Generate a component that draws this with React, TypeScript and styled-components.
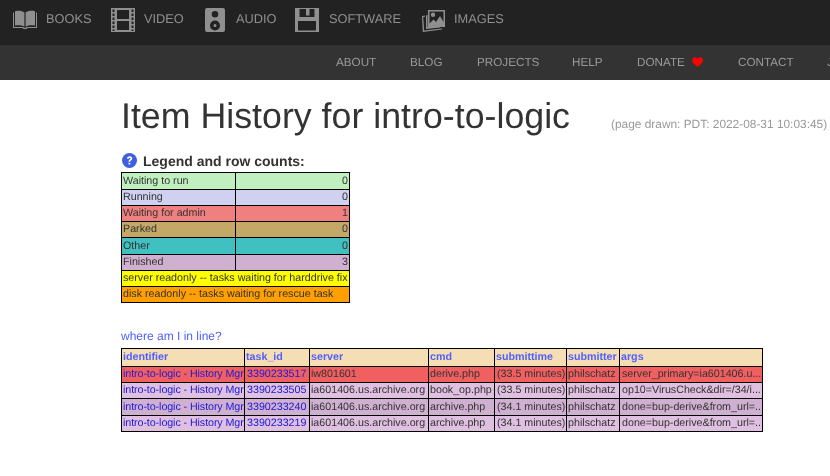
import React from "react";
import styled, { createGlobalStyle } from "styled-components";

const Global = createGlobalStyle`
  html, body { margin: 0; padding: 0; background: #fff; overflow: hidden; }
  body { font-family: "Liberation Sans", Arial, sans-serif; color: #333; text-rendering: geometricPrecision; }
`;
const Page = styled.div`width: 830px; height: 476px; overflow: hidden; will-change: transform;`;
const TopBar = styled.nav`
  height: 45px; background: #222; display: flex; align-items: flex-start; padding-left: 13px;
`;
const MediaLink = styled.a<{ $w: number; $gap: number }>`
  width: ${(p) => p.$w}px; height: 36px; display: flex; align-items: center; gap: ${(p) => p.$gap}px;
  color: #8f8f8f; font-size: 12.8px; flex: none;
  svg { margin-top: 4px; flex: none; }
`;
const SubBar = styled.nav`
  height: 35px; background: #333; display: flex; align-items: center; padding-left: 336px;
  white-space: nowrap; overflow: hidden;
`;
const SubLink = styled.a<{ $w: number }>`
  width: ${(p) => p.$w}px; flex: none; color: #9a9a9a; font-size: 11.7px; display: flex; align-items: center;
`;
const Heart = styled.svg`margin: -1px 0 0 7px;`;
const Main = styled.main`padding: 0 0 0 121px;`;
const TitleRow = styled.div`display: flex; align-items: baseline; height: 73px; padding-top: 15px; box-sizing: border-box; white-space: nowrap;`;
const Title = styled.h1`margin: 0; font-size: 35.75px; line-height: 42px; font-weight: 400; color: #333;`;
const Drawn = styled.span`margin-left: 41px; font-size: 11.9px; color: #999;`;
const LegendHead = styled.h4`
  margin: 0; height: 19px; font-size: 14px; line-height: 16px; font-weight: 700; color: #333;
  display: flex; align-items: flex-start; gap: 6px;
  svg { margin-left: 1px; }
`;
const Grid = styled.table`
  border-collapse: collapse; table-layout: fixed; font-size: 10.7px; line-height: 15px; color: #333;
`;
const Row = styled.tr<{ $bg: string; $h?: number }>`
  background: ${(p) => p.$bg}; height: ${(p) => p.$h ?? 16}px;
`;
const Cell = styled.td<{ $right?: boolean }>`
  border: 1px solid #000; padding: 0 1px; white-space: nowrap; overflow: hidden;
  text-align: ${(p) => (p.$right ? "right" : "left")};
`;
const Wide = styled(Cell)`padding-left: 2px;`;
const Tight = styled(Cell)`padding: 0 0 0 1px; letter-spacing: -0.08px;`;
const Head = styled.th`
  border: 1px solid #000; padding: 0 1px; text-align: left; font-weight: 700;
  color: #4f5fff; white-space: nowrap;
`;
const LineLink = styled.a`display: block; margin-top: 26px; height: 19px; line-height: 14px; font-size: 12px; color: #4f5fff;`;
const Blue = styled.span`color: #1a1ad8;`;

const Book = () => (
  <svg width="24" height="24" viewBox="0 0 24 24" fill="#8f8f8f">
    <path d="M0 4.500v15.600h9.500l1 .9h3l1-.9H24V4.500h-1v14.600H14l-2 1-2-1H1V4.500z" />
    <path d="M2 3.200c3.500-.8 7-.6 9.400 1.200v14.400c-2.400-1.500-5.900-1.700-9.400-1.200zM22 3.200c-3.500-.8-7-.6-9.400 1.200v14.400c2.400-1.500 5.900-1.700 9.400-1.200z" />
  </svg>
);
const Film = () => (
  <svg width="24" height="24" viewBox="0 0 24 24" fill="#8f8f8f" fillRule="evenodd">
    <path d="M0 0h24v24H0zM1.500 1.500v2.500h2V1.500zm0 4v2.500h2V5.500zm0 4v2.500h2V9.500zm0 4V16h2v-2.500zm0 4V20h2v-2.500zm0 4V23h2v-1.500zM20.500 1.500v2.500h2V1.500zm0 4v2.500h2V5.500zm0 4v2.500h2V9.500zm0 4V16h2v-2.500zm0 4V20h2v-2.500zm0 4V23h2v-1.500zM6 2v9h12V2zm0 11v9h12v-9z" />
  </svg>
);
const Speaker = () => (
  <svg width="20" height="24" viewBox="0 0 20 24" fill="#8f8f8f" fillRule="evenodd">
    <path d="M2 0h16a2 2 0 0 1 2 2v20a2 2 0 0 1-2 2H2a2 2 0 0 1-2-2V2a2 2 0 0 1 2-2zM10 3a3.300 3.300 0 1 0 0 6.600A3.300 3.300 0 0 0 10 3zm0 9.500a5 5 0 1 0 0 10 5 5 0 0 0 0-10zm0 3.500a1.500 1.500 0 1 1 0 3 1.500 1.500 0 0 1 0-3z" />
  </svg>
);
const Floppy = () => (
  <svg width="24" height="24" viewBox="0 0 24 24" fill="#8f8f8f" fillRule="evenodd">
    <path d="M0 0h24v24H0zM4.500 1v8h15V1h-5v6.500h-3.500V1zM3 13v9.500h18V13z" />
  </svg>
);
const Photos = () => (
  <svg width="24" height="24" viewBox="0 0 24 24" fill="#8f8f8f" fillRule="evenodd">
    <path d="M7 2h17v17H7zM8.500 3.500v12l4-4 2.500 2.500 4-6 3.500 6v-10.500zM12 4.500a2.200 2.200 0 1 1 0 4.400 2.200 2.200 0 0 1 0-4.400z" />
    <path d="M5 7.500v13.500l14-1.500v-.5H6.500V6.800zM1 8l3-.4v1.200l-1.800.3 1 13.400L21 20.600v1L1.800 24z" />
  </svg>
);

const media = [
  { label: "BOOKS", w: 98, gap: 9, icon: <Book /> },
  { label: "VIDEO", w: 94, gap: 9, icon: <Film /> },
  { label: "AUDIO", w: 90, gap: 11, icon: <Speaker /> },
  { label: "SOFTWARE", w: 126, gap: 10, icon: <Floppy /> },
  { label: "IMAGES", w: 100, gap: 9, icon: <Photos /> },
];
const sub = [
  ["ABOUT", 74], ["BLOG", 67], ["PROJECTS", 95], ["HELP", 65], ["DONATE", 101], ["CONTACT", 89], ["J", 20],
] as [string, number][];

const legend = [
  ["Waiting to run", "0", "#c0f0c0", 17], ["Running", "0", "#d0d0f0", 16], ["Waiting for admin", "1", "#f08080", 16],
  ["Parked", "0", "#c4a868", 16], ["Other", "0", "#40c0c0", 17], ["Finished", "3", "#d0b0d0", 16],
] as [string, string, string, number][];
const tasks = [
  ["3390233517", "iw801601", "derive.php", "(33.5 minutes)", "server_primary=ia601406.u...", "#f06060", 16],
  ["3390233505", "ia601406.us.archive.org", "book_op.php", "(33.5 minutes)", "op10=VirusCheck&dir=/34/i...", "#e0c0e0", 16],
  ["3390233240", "ia601406.us.archive.org", "archive.php", "(34.1 minutes)", "done=bup-derive&from_url=...", "#d0b0d0", 17],
  ["3390233219", "ia601406.us.archive.org", "archive.php", "(34.1 minutes)", "done=bup-derive&from_url=...", "#e0c0e0", 16],
] as [string, string, string, string, string, string, number][];
const widths = [123, 65, 119, 66, 72, 53, 143];

export default function App() {
  return (
    <Page>
      <Global />
      <TopBar>
        {media.map((m) => (
          <MediaLink key={m.label} $w={m.w} $gap={m.gap}>{m.icon}{m.label}</MediaLink>
        ))}
      </TopBar>
      <SubBar>
        {sub.map(([t, w]) => (
          <SubLink key={t} $w={w}>
            {t}
            {t === "DONATE" && (
              <Heart width="11" height="10" viewBox="0 0 24 22" fill="#f00">
                <path d="M12 22C5 16 0 12 0 6.500A6.300 6.300 0 0 1 12 4a6.300 6.300 0 0 1 12 2.500C24 12 19 16 12 22z" />
              </Heart>
            )}
          </SubLink>
        ))}
      </SubBar>
      <Main>
        <TitleRow>
          <Title>Item History for intro-to-logic</Title>
          <Drawn>(page drawn: PDT: 2022-08-31 10:03:45)</Drawn>
        </TitleRow>
        <LegendHead>
          <svg width="15" height="15" viewBox="0 0 16 16">
            <circle cx="8" cy="8" r="8" fill="#3f5fe0" />
            <path d="M5.300 6.200C5.300 4.600 6.500 3.500 8.200 3.500c1.600 0 2.700 1 2.700 2.300 0 1.100-.6 1.700-1.400 2.200-.6.400-.8.700-.8 1.400H7c0-1.200.3-1.800 1.100-2.400.6-.4.900-.7.900-1.100 0-.5-.4-.8-.9-.8-.6 0-1 .4-1 1.100zM7 10.400h1.800v1.800H7z" fill="#fff" />
          </svg>
          Legend and row counts:
        </LegendHead>
        <Grid style={{ width: 228 }}>
          <colgroup><col width={114} /><col width={114} /></colgroup>
          <tbody>
            {legend.map(([a, b, c, h]) => (
              <Row key={a} $bg={c} $h={h}><Cell>{a}</Cell><Cell $right>{b}</Cell></Row>
            ))}
            <Row $bg="#ffff00"><Cell colSpan={2}>server readonly -- tasks waiting for harddrive fix</Cell></Row>
            <Row $bg="#ffa000"><Cell colSpan={2}>disk readonly -- tasks waiting for rescue task</Cell></Row>
          </tbody>
        </Grid>
        <LineLink>where am I in line?</LineLink>
        <Grid style={{ width: 641 }}>
          <colgroup>{widths.map((w, i) => <col key={i} width={w} />)}</colgroup>
          <thead>
            <Row $bg="#f5deb3" $h={18}>
              {["identifier", "task_id", "server", "cmd", "submittime", "submitter", "args"].map((h) => <Head key={h}>{h}</Head>)}
            </Row>
          </thead>
          <tbody>
            {tasks.map((t) => (
              <Row key={t[0]} $bg={t[5]} $h={t[6]}>
                <Tight><Blue>intro-to-logic - History Mgr</Blue></Tight>
                <Wide><Blue>{t[0]}</Blue></Wide>
                <Cell>{t[1]}</Cell>
                <Cell>{t[2]}</Cell>
                <Wide>{t[3]}</Wide>
                <Cell>philschatz</Cell>
                <Wide>{t[4]}</Wide>
              </Row>
            ))}
          </tbody>
        </Grid>
      </Main>
    </Page>
  );
}
